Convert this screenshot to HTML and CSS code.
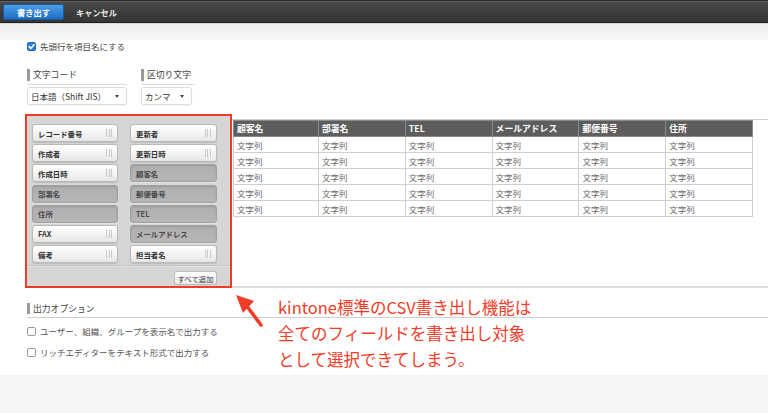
FILE: index.html
```html
<!DOCTYPE html>
<html lang="ja">
<head>
<meta charset="utf-8">
<title>CSV書き出し</title>
<link rel="stylesheet" href="styles.css">
</head>
<body>
<div class="page">
  <div class="topbar">
    <span class="btn-export">書き出す</span>
    <span class="btn-cancel">キャンセル</span>
  </div>
  <div class="band"></div>
  <div class="content">
    <div class="check-row head-check">
      <span class="cb cb-on"><svg viewBox="0 0 9 9" width="9" height="9"><path d="M2 4.6 L3.8 6.4 L7.2 2.6" fill="none" stroke="#fff" stroke-width="1.5" stroke-linecap="round" stroke-linejoin="round"/></svg></span>
      <span>先頭行を項目名にする</span>
    </div>

    <div class="settings">
      <div class="setting s-code">
        <div class="sec-label"><span class="bar">文字コード</span></div>
        <div class="select">日本語（Shift JIS）<span class="caret"></span></div>
      </div>
      <div class="setting s-sep">
        <div class="sec-label"><span class="bar">区切り文字</span></div>
        <div class="select">カンマ<span class="caret"></span></div>
      </div>
    </div>

    <div class="main">
      <div class="fields-box">
        <div class="fields-grid">
          <div class="fld">レコード番号<span class="grip"></span></div>
          <div class="fld">更新者<span class="grip"></span></div>
          <div class="fld">作成者<span class="grip"></span></div>
          <div class="fld">更新日時<span class="grip"></span></div>
          <div class="fld">作成日時<span class="grip"></span></div>
          <div class="fld off">顧客名</div>
          <div class="fld off">部署名</div>
          <div class="fld off">郵便番号</div>
          <div class="fld off">住所</div>
          <div class="fld off">TEL</div>
          <div class="fld">FAX<span class="grip"></span></div>
          <div class="fld off">メールアドレス</div>
          <div class="fld">備考<span class="grip"></span></div>
          <div class="fld">担当者名<span class="grip"></span></div>
        </div>
        <div class="fields-foot"><span class="add-all">すべて追加</span></div>
      </div>
      <div class="preview">
        <table class="tbl">
          <thead>
            <tr><th>顧客名</th><th>部署名</th><th>TEL</th><th>メールアドレス</th><th>郵便番号</th><th>住所</th></tr>
          </thead>
          <tbody>
            <tr><td>文字列</td><td>文字列</td><td>文字列</td><td>文字列</td><td>文字列</td><td>文字列</td></tr>
            <tr><td>文字列</td><td>文字列</td><td>文字列</td><td>文字列</td><td>文字列</td><td>文字列</td></tr>
            <tr><td>文字列</td><td>文字列</td><td>文字列</td><td>文字列</td><td>文字列</td><td>文字列</td></tr>
            <tr><td>文字列</td><td>文字列</td><td>文字列</td><td>文字列</td><td>文字列</td><td>文字列</td></tr>
            <tr><td>文字列</td><td>文字列</td><td>文字列</td><td>文字列</td><td>文字列</td><td>文字列</td></tr>
          </tbody>
        </table>
      </div>
    </div>

    <div class="sec-label out-label"><span class="bar">出力オプション</span></div>
    <div class="check-row opt1"><span class="cb"></span><span>ユーザー、組織、グループを表示名で出力する</span></div>
    <div class="check-row opt2"><span class="cb"></span><span>リッチエディターをテキスト形式で出力する</span></div>
  </div>
  <div class="footer-band"></div>

  <svg class="arrow" viewBox="0 0 36 42" width="36" height="42">
    <line x1="16" y1="17" x2="31" y2="37" stroke="#ee3d2a" stroke-width="3.6" stroke-linecap="round"/>
    <polygon points="6,7 24,13 13,25" fill="#ee3d2a"/>
  </svg>
  <div class="note">kintone標準のCSV書き出し機能は<br>全てのフィールドを書き出し対象<br>として選択できてしまう。</div>
</div>
</body>
</html>
```

FILE: styles.css
```css
* { box-sizing: border-box; margin: 0; padding: 0; }
html, body { width: 768px; height: 413px; overflow: hidden; background: #fff; }
body {
  font-family: "Noto Sans CJK JP", "Liberation Sans", sans-serif;
  font-size: 8.5px;
  color: #333;
}
.page { position: relative; height: 413px; display: flex; flex-direction: column; }

/* top bar */
.topbar {
  height: 23px;
  flex: none;
  display: flex;
  align-items: center;
  padding-left: 3px;
  background: linear-gradient(#4c4c4c, #3b3b3b 60%, #363636);
  border-top: 1px solid #2a2a2a;
  border-bottom: 1px solid #1f1f1f;
  box-shadow: inset 0 1px 0 #626262;
}
.btn-export {
  width: 61px; height: 16px;
  display: flex; align-items: center; justify-content: center;
  background: linear-gradient(#4c9de8, #1f6ec6);
  border: 1px solid #185aa3;
  border-radius: 2px;
  color: #fff; font-weight: bold; font-size: 8.2px;
}
.btn-cancel { margin-left: 12px; color: #e8e8e8; font-weight: bold; font-size: 8.2px; }
.band {
  height: 17px; flex: none;
  background: linear-gradient(#cfcfcf 0, #ededed 1.5px, #f3f3f3 50%, #fafafa 100%);
}

/* content */
.content { padding-left: 27px; display: flex; flex-direction: column; }
.check-row { display: flex; align-items: center; height: 12px; gap: 4px; color: #444; font-size: 8.5px; }
.cb {
  width: 9px; height: 9px; flex: none;
  border: 1px solid #9a9a9a; border-radius: 2px; background: #fff;
  display: flex;
}
.cb-on { background: #2d7fd8; border-color: #1f68bd; }
.cb-on svg { display: block; margin: -1px; }

.settings { margin-top: 17px; display: flex; gap: 14px; }
.s-code { width: 100px; }
.s-sep { width: 54px; }
.sec-label { padding-bottom: 3px; border-bottom: 1px solid #dedede; }
.sec-label .bar {
  display: block; height: 12px; line-height: 12px;
  border-left: 3px solid #9a9a9a; padding-left: 3px;
  color: #444; font-size: 8.8px;
}
.select {
  margin-top: 2px; height: 18px;
  display: flex; align-items: center;
  border: 1px solid #dcdcdc; border-radius: 3px;
  padding-left: 3px; color: #333; font-size: 8.5px;
  box-shadow: 0 1px 1px rgba(0,0,0,.05);
}
.s-sep .select { width: 51px; }
.caret {
  margin-left: auto; margin-right: 7px;
  width: 0; height: 0;
  border-left: 2.5px solid transparent; border-right: 2.5px solid transparent;
  border-top: 3.5px solid #444;
}

/* main */
.main { margin-top: 9px; margin-left: -2px; display: flex; height: 174px; }
.fields-box {
  width: 207px; flex: none;
  border: 2px solid #f23a26;
  background: #d6d6d7;
  padding: 8px 0 0 5px;
  display: flex; flex-direction: column;
}
.fields-grid {
  display: grid;
  grid-template-columns: 86px 87px;
  grid-auto-rows: 18px;
  column-gap: 12px; row-gap: 2.2px;
}
.fld {
  display: flex; align-items: center;
  padding-left: 5px; padding-right: 5px;
  border: 1px solid #b9b9b9; border-radius: 3px;
  background: linear-gradient(#ffffff, #f3f3f3 55%, #e6e6e6);
  box-shadow: 0 1px 1px rgba(0,0,0,.12);
  font-weight: bold; font-size: 7.4px; color: #333;
}
.fld.off {
  background: linear-gradient(#aeaeae, #b6b6b6);
  border-color: #a1a1a1;
  box-shadow: inset 0 1px 2px rgba(0,0,0,.12), 0 1px 0 rgba(255,255,255,.35);
  color: #4a4a4a;
}
.grip {
  margin-left: auto; width: 6px; height: 8px;
  background: repeating-linear-gradient(90deg, #c8c8c8 0 1px, transparent 1px 2.5px);
}
.fields-foot {
  margin: 2px 0 0 -5px;
  border-top: 1px solid #c2c2c2;
  box-shadow: inset 0 1px 0 #e2e2e2;
  padding: 5px 13px 0 0;
  display: flex; justify-content: flex-end;
}
.add-all {
  width: 43px; height: 14px;
  display: flex; align-items: center; justify-content: center;
  border: 1px solid #b9b9b9; border-radius: 3px;
  background: linear-gradient(#ffffff, #ececec);
  font-size: 7.4px; color: #333;
}

.preview {
  flex: 1;
  margin-top: 5px;
  padding-left: 1px;
  border-top: 1px solid #d0d0d0;
  border-bottom: 2px solid #dedede;
}
.tbl { border-collapse: collapse; width: 520px; table-layout: fixed; }
.tbl th, .tbl td { height: 16px; padding: 0 0 0 3px; text-align: left; vertical-align: middle; white-space: nowrap; }
.tbl th {
  background: #5d5d5d; color: #fff; font-weight: bold; font-size: 8.8px;
  border: 1px solid #8a8a8a;
}
.tbl td { border: 1px solid #cfcfcf; color: #666; font-size: 8.5px; font-weight: normal; }
.tbl th:first-child, .tbl td:first-child { width: 85px; }

.out-label { margin-top: 15px; border-bottom-color: #cfcfcf; }
.out-label .bar { height: 11px; line-height: 11px; }
.opt1 { margin-top: 7px; color: #555; }
.opt2 { margin-top: 9px; color: #555; }

.footer-band { margin-top: auto; height: 38px; flex: none; background: #f6f6f6; }

/* annotation overlay */
.arrow { position: absolute; left: 230px; top: 288px; }
.note {
  position: absolute; left: 278px; top: 294px;
  font-size: 16.5px; line-height: 26px;
  color: #f23c28; white-space: nowrap;
}
```
